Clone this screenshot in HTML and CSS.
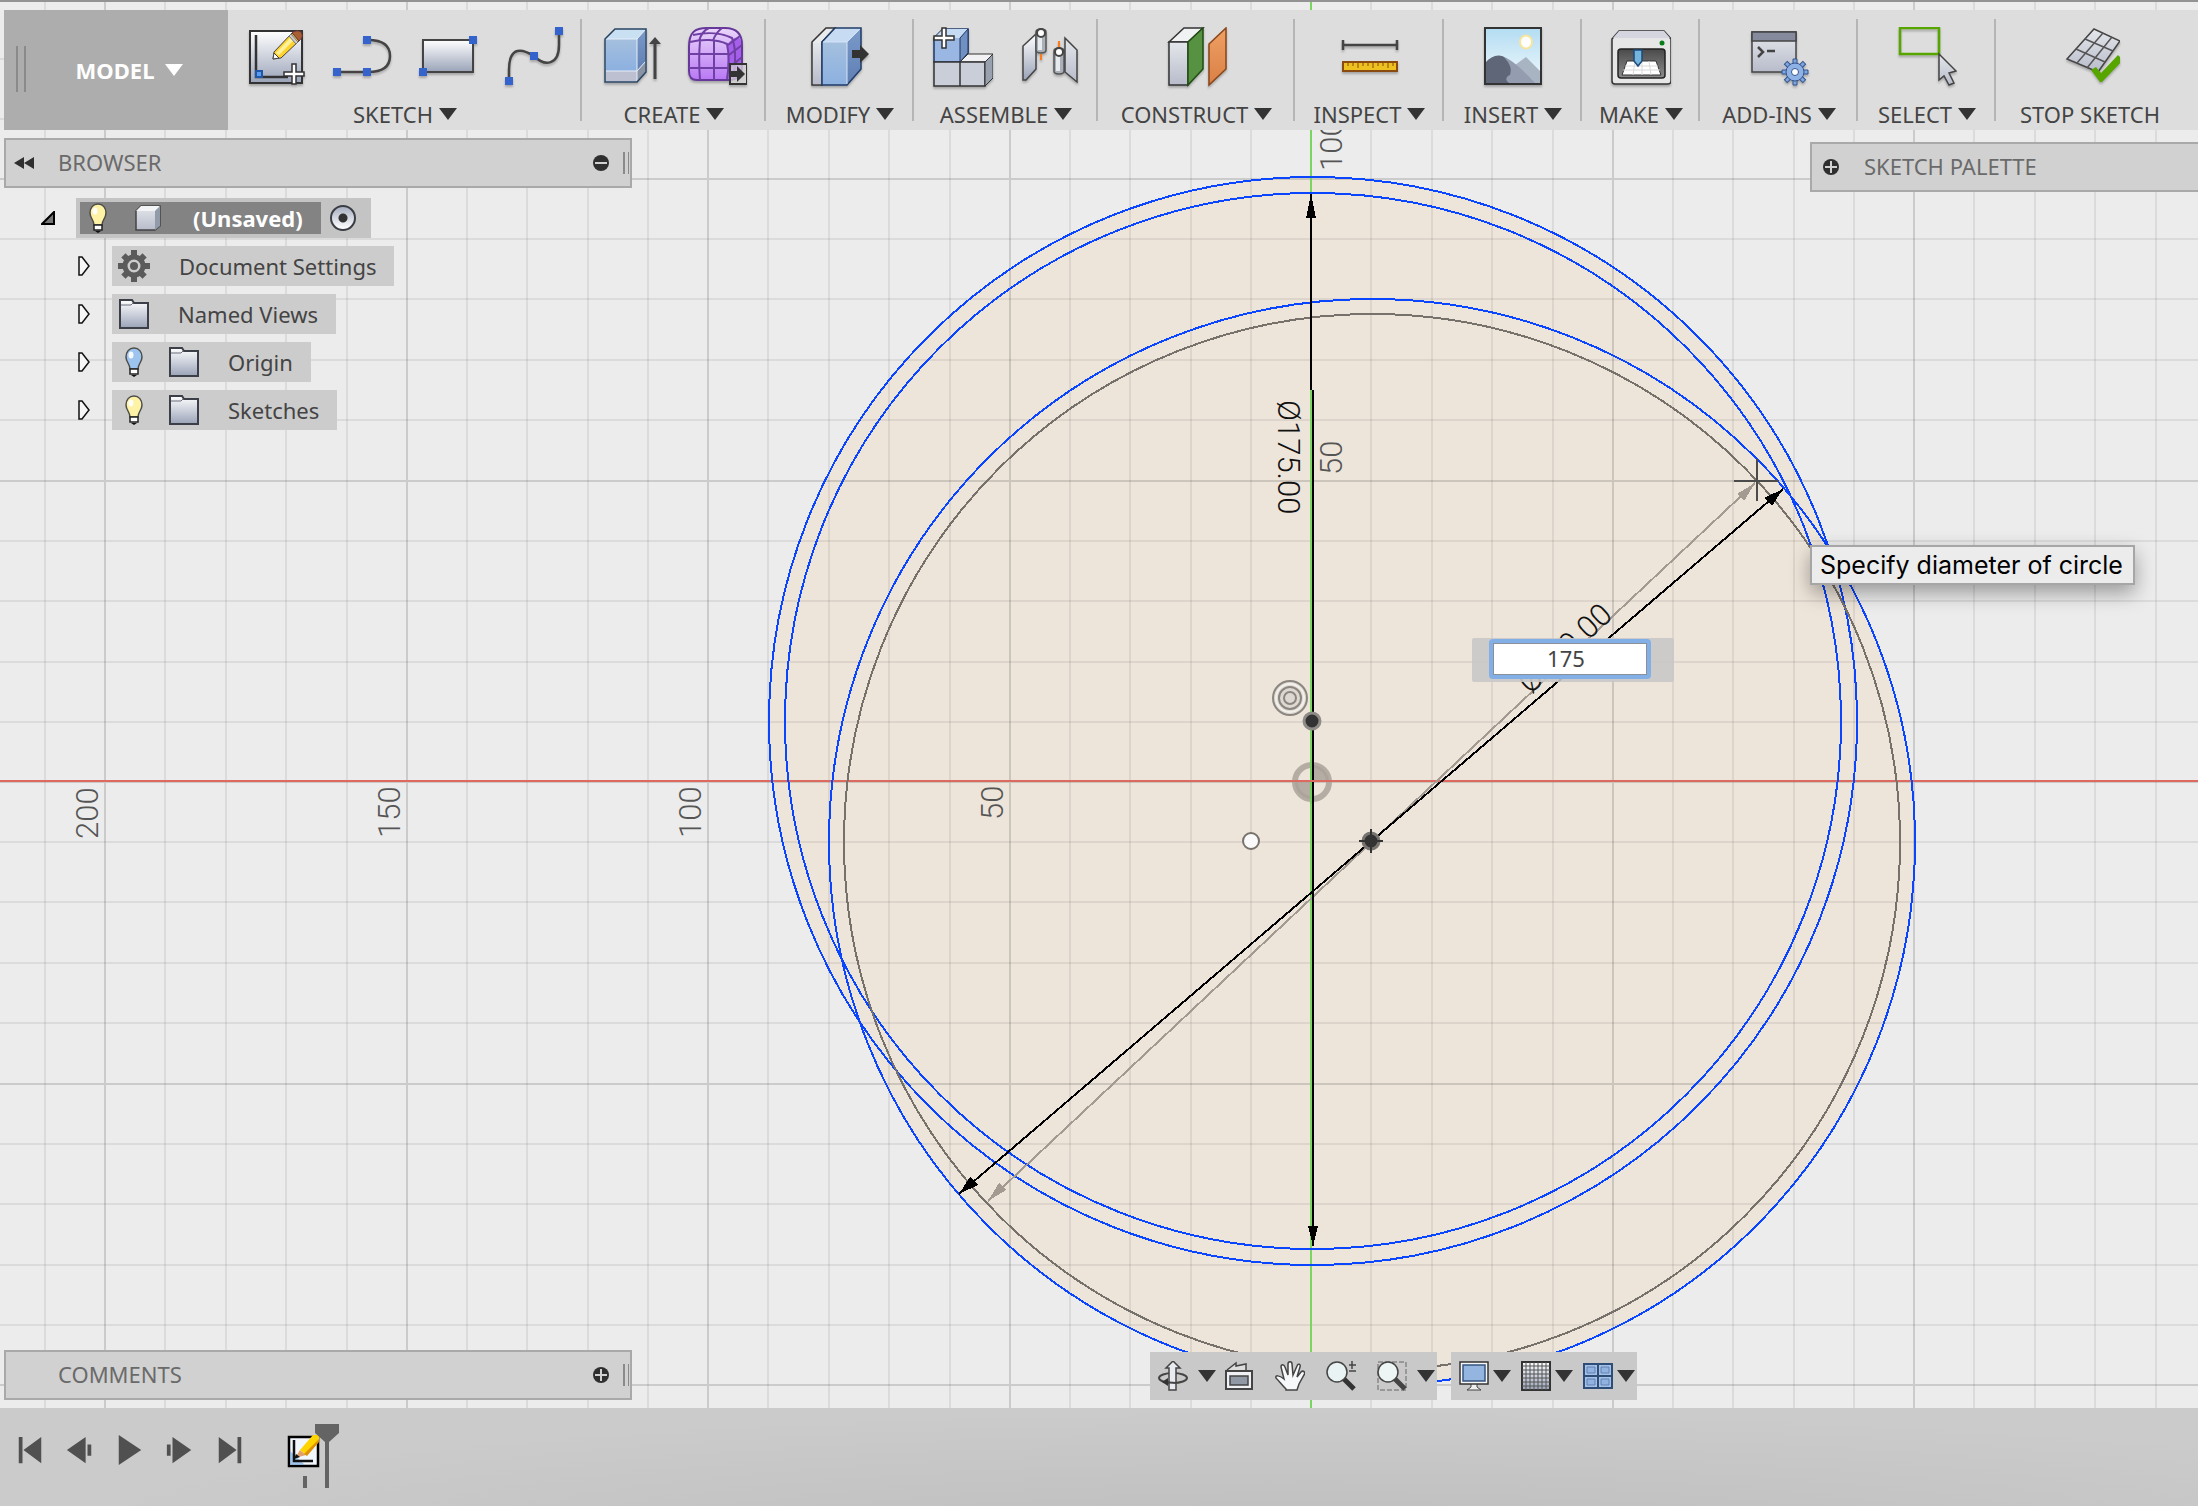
FILE: index.html
```html
<!DOCTYPE html>
<html lang="en">
<head>
<meta charset="utf-8">
<title>Sketch workspace</title>
<link rel="stylesheet" href="styles.css">
</head>
<body>
<svg class="defs" width="0" height="0" aria-hidden="true">
  <defs>
    <linearGradient id="steel" x1="0" y1="0" x2="0" y2="1"><stop offset="0" stop-color="#fff"/><stop offset="1" stop-color="#9aa3b8"/></linearGradient>
    <linearGradient id="pale" x1="0" y1="0" x2="0" y2="1"><stop offset="0" stop-color="#e4e7ea"/><stop offset="1" stop-color="#b8bccb"/></linearGradient>
    <linearGradient id="blue" x1="0" y1="0" x2="0" y2="1"><stop offset="0" stop-color="#a5c0de"/><stop offset="1" stop-color="#8cb0e0"/></linearGradient>
    <linearGradient id="side" x1="0" y1="0" x2="0" y2="1"><stop offset="0" stop-color="#7b9ac9"/><stop offset="1" stop-color="#5f7fb4"/></linearGradient>
    <linearGradient id="purple" x1="0" y1="0" x2="0" y2="1"><stop offset="0" stop-color="#ead6fa"/><stop offset="1" stop-color="#b878f4"/></linearGradient>
    <linearGradient id="sky" x1="0" y1="0" x2="0" y2="1"><stop offset="0" stop-color="#b3dcf2"/><stop offset="1" stop-color="#f2fafd"/></linearGradient>
    <linearGradient id="orange" x1="0" y1="0" x2="0" y2="1"><stop offset="0" stop-color="#f0a064"/><stop offset="1" stop-color="#d98046"/></linearGradient>
    <linearGradient id="screen" x1="0" y1="0" x2="0" y2="1"><stop offset="0" stop-color="#4a4a4a"/><stop offset="1" stop-color="#8d8d8d"/></linearGradient>
    <symbol id="folder" viewBox="0 0 30 32">
      <path d="M1 30V2H13L15 5H29V30Z" fill="url(#steel)" stroke="#3c3f48" stroke-width="2"/>
      <path d="M2 7H12L14 5" fill="none" stroke="#6a6e7c" stroke-width="1"/>
    </symbol>
    <symbol id="bulb" viewBox="0 0 18 30">
      <path d="M9 1C4 1 1 5 1 10C1 15 5 17 5 22H13C13 17 17 15 17 10C17 5 14 1 9 1Z" fill="currentColor" stroke="#4d4d48" stroke-width="1.5"/>
      <path d="M5 22H13V27H5Z" fill="#fff" stroke="#222" stroke-width="1.5"/>
      <path d="M6 28H12L9 30Z" fill="#111"/><ellipse cx="6" cy="8" rx="2.5" ry="3.5" fill="#fff" opacity=".9"/>
    </symbol>
    <symbol id="caret" viewBox="0 0 18 12"><path d="M0 0H18L9 12Z" fill="currentColor"/></symbol>
    <symbol id="closed" viewBox="0 0 12 20"><path d="M1 1H4L11 10L4 19H1Z" fill="#f6f6f6" stroke="#111" stroke-width="1.5"/></symbol>
    <symbol id="plus" viewBox="0 0 16 16"><circle cx="8" cy="8" r="8" fill="#2f2f2f"/><path d="M8 2V14M2 8H14" stroke="#d1d1d1" stroke-width="2"/></symbol>
    <symbol id="minus" viewBox="0 0 16 16"><circle cx="8" cy="8" r="8" fill="#2f2f2f"/><path d="M2 8H14" stroke="#d1d1d1" stroke-width="2"/></symbol>
  </defs>
</svg>

<div class="app">
<main class="workspace">
  <svg class="canvas" width="100%" height="100%" role="img" aria-label="Sketch with two pairs of circles">
    <defs>
      <pattern id="grid" x="104" y="178" width="603" height="603" patternUnits="userSpaceOnUse">
        <path fill="#000" fill-opacity=".07" d="M60 0h2v603h-2zM121 0h2v603h-2zM181 0h2v603h-2zM242 0h2v603h-2zM362 0h2v603h-2zM422 0h2v603h-2zM483 0h2v603h-2zM543 0h2v603h-2z"/>
        <path fill="#000" fill-opacity=".07" d="M0 60h603v2H0zM0 120h603v2H0zM0 181h603v2H0zM0 241h603v2H0zM0 362h603v2H0zM0 422h603v2H0zM0 483h603v2H0zM0 543h603v2H0z"/>
        <path fill="#000" fill-opacity=".14" d="M0 0h2v603h-2zM302 0h2v603h-2zM0 0h603v2H0zM0 302h603v2H0z"/>
      </pattern>
    </defs>
    <path class="region" d="M769 721a544 544 0 1 0 1088 0a544 544 0 1 0 -1088 0ZM829 842a543 543 0 1 0 1086 0a543 543 0 1 0 -1086 0Z"/>
    <rect width="100%" height="100%" fill="url(#grid)"/>
    <rect class="axis-x" x="0" y="780" width="100%" height="2"/>
    <rect class="axis-y" x="1310" y="0" width="2" height="100%"/>
    <g class="curve">
      <circle cx="1313" cy="721" r="544"/><circle cx="1313" cy="721" r="528"/><circle cx="1372" cy="842" r="543"/>
      <circle class="preview" cx="1372" cy="842" r="528"/>
    </g>
    <g class="ruler">
      <text transform="translate(98 839) rotate(-90)">200</text>
      <text transform="translate(400 838) rotate(-90)">150</text>
      <text transform="translate(701 838) rotate(-90)">100</text>
      <text transform="translate(1003 820) rotate(-90)">50</text>
      <text transform="translate(1342 475) rotate(-90)">50</text>
      <text transform="translate(1342 171) rotate(-90)">100</text>
    </g>
    <g class="ghost"><path d="M1755 483L988 1201" fill="none"/><path d="M1755 483L1744 501L1737 494ZM988 1201L999 1183L1006 1190Z" stroke="none"/></g>
    <g class="dimension">
      <path d="M1783 489L959 1194M1311 194V390M1313 390V1246" fill="none"/>
      <path d="M1783 489L1772 506L1764 498ZM959 1194L970 1177L978 1185ZM1311 194L1316 218H1306ZM1313 1246L1318 1226H1308Z" stroke="none"/>
    </g>
    <g class="dim-text">
      <text transform="translate(1278 400) rotate(90)">Ø175.00</text>
      <text transform="translate(1614 617) rotate(-43)" text-anchor="end">Ø180.00</text>
    </g>
    <g fill="none" stroke="#8b8780" stroke-width="2"><circle cx="1290" cy="698" r="17" fill="#ddd8d0"/><circle cx="1290" cy="698" r="14" stroke="#f3f0ec"/><circle cx="1290" cy="698" r="11"/><circle cx="1290" cy="698" r="6"/></g>
    <g><circle cx="1312" cy="782" r="17" fill="none" stroke="#aaa29a" stroke-width="6" opacity=".85"/><path d="M1312 782V765A17 17 0 0 1 1329 782ZM1312 782V799A17 17 0 0 1 1295 782Z" fill="#aaa29a" opacity=".85"/><path d="M1311 760V804" stroke="#6fce58" stroke-width="2"/><path d="M1313 760V804" stroke="#000" stroke-width="2"/><path d="M1290 781H1334" stroke="#dc6a60" stroke-width="2"/></g>
    <circle cx="1312" cy="721" r="8" fill="#333" stroke="#8f8c88" stroke-width="3"/>
    <circle cx="1251" cy="841" r="8" fill="#fafafa" stroke="#77726c" stroke-width="2"/>
    <circle cx="1371" cy="841" r="8" fill="#333" stroke="#77746f" stroke-width="3"/>
    <path d="M1371 829V853M1359 841H1383" stroke="#333" stroke-width="2"/>
    <path d="M1757 459V501M1734 481H1778" stroke="#4b4b4b" stroke-width="2"/>
  </svg>

  <header class="toolbar">
    <button class="mode"><span class="grip"></span><span>MODEL</span><svg class="caret"><use href="#caret"/></svg></button>
    <nav class="groups" aria-label="Tools">
      <section class="group">
        <div class="icons">
          <svg class="icon" viewBox="0 0 60 60"><rect x="4" y="4" width="52" height="52" fill="url(#steel)" stroke="#333" stroke-width="2"/><path d="M10 8V50H42" fill="none" stroke="#333" stroke-width="2.5"/><rect x="10" y="44" width="6" height="6" fill="#5b9bf0" stroke="#1f57a8" stroke-width="2"/><path d="M27 32L28 25L46 6L54 13L35 31Z" fill="#ffd32e" stroke="#444"/><path d="M30 26L47 8L50 11L33 28Z" fill="#fff19a"/><path d="M43 9L50 17L52 15L45 7Z" fill="#ccc" stroke="#777"/><path d="M46 6C49 3 55 3 56 7C57 10 55 12 53 14Z" fill="#a85f34" stroke="#633"/><path d="M27 32L28 26L33 31Z" fill="#fff" stroke="#444"/><path d="M46 37H50V45H58V49H50V57H46V49H38V45H46Z" fill="#fff" stroke="#333" stroke-width="1.5"/></svg>
          <svg class="icon" viewBox="0 0 60 60"><path d="M5 45H36C51 45 58 40 58 29S51 13 36 13" fill="none" stroke="#444" stroke-width="2.5"/><path d="M1 41h8v8H1zM31 41h8v8h-8zM31 9h8v8h-8z" fill="#3563cc"/></svg>
          <svg class="icon" viewBox="0 0 60 60"><rect x="5" y="13" width="50" height="32" fill="url(#steel)" stroke="#444" stroke-width="2"/><path d="M1 41h8v8H1zM51 9h8v8h-8z" fill="#3563cc"/></svg>
          <svg class="icon" viewBox="0 0 60 60"><path d="M5 54V43C5 18 19 22 30 29C41 40 55 38 55 18V4" fill="none" stroke="#444" stroke-width="2.5"/><path d="M1 50h8v8H1zM26 25h8v8h-8zM51 0h8v8h-8z" fill="#3563cc"/></svg>
        </div>
        <button class="label">SKETCH<svg class="caret"><use href="#caret"/></svg></button>
      </section>
      <section class="group">
        <div class="icons">
          <svg class="icon" viewBox="0 0 60 60"><path d="M4 12L14 2H45L36 12Z" fill="#c9dff2"/><path d="M4 12H36V44H4Z" fill="url(#blue)"/><path d="M36 12L45 2V34L36 44Z" fill="url(#side)"/><path d="M4 44H36V55H4Z" fill="#bcc0d0"/><path d="M36 44L45 34V45L36 55Z" fill="#8a93a3"/><path d="M4 12L14 2H45V45L36 55H4ZM4 44H36L45 34M4 12H36V55M36 12L45 2" fill="none" stroke="#e6eef8"/><path d="M4 12L14 2H45V45L36 55H4Z" fill="none" stroke="#26425f" stroke-width="1.5"/><path d="M54 52V15" stroke="#444" stroke-width="3"/><path d="M48 17L54 10L60 17Z" fill="#444"/></svg>
          <svg class="icon" viewBox="0 0 60 60"><path d="M2 20C2 5 8 1 20 1H38C50 1 55 8 55 18V38C55 47 51 53 42 53H10C4 53 2 50 2 44Z" fill="url(#purple)" stroke="#66389a" stroke-width="2"/><path d="M41 17C46 10 50 10 54 12V42L46 51L40 52Z" fill="#a55feb"/><path d="M3 15C15 12 30 12 40 17C42 26 42 40 40 52M12 14C14 7 17 3 22 1M26 14C28 7 31 4 35 1M13 14C12 25 12 40 13 53M27 13V53M2 27H41M2 41H41M6 8C20 5 35 6 45 11C49 20 49 38 46 51M41 18L53 9M42 28L55 18M42 41L55 30" fill="none" stroke="#6f3fa4" stroke-width="2"/><rect x="43" y="37" width="17" height="20" fill="#ddd" fill-opacity=".7" stroke="#333" stroke-width="2"/><path d="M43 44H50V39L58 47L50 55V50H43Z" fill="#333"/></svg>
        </div>
        <button class="label">CREATE<svg class="caret"><use href="#caret"/></svg></button>
      </section>
      <section class="group">
        <div class="icons">
          <svg class="icon" viewBox="0 0 60 60"><path d="M2 15L16 1H25L12 15V58H2Z" fill="#e9ebed" stroke="#333" stroke-width="1.5"/><path d="M3 16H11V57H3Z" fill="url(#pale)"/><path d="M12 15L25 1H51L37 15Z" fill="#c7dcf3"/><path d="M12 15H37V58H12Z" fill="url(#blue)"/><path d="M37 15L51 1V42L37 58Z" fill="url(#side)"/><path d="M12 15L25 1H51V42L37 58H12Z" fill="none" stroke="#203c69" stroke-width="1.5"/><path d="M13 15H37V57M37 15L50 2" fill="none" stroke="#d5e4f6"/><path d="M42 23H50V18L59 27L50 36V31H42Z" fill="#333"/></svg>
        </div>
        <button class="label">MODIFY<svg class="caret"><use href="#caret"/></svg></button>
      </section>
      <section class="group">
        <div class="icons">
          <svg class="icon" viewBox="0 0 60 60"><path d="M1 11L10 2H35V26L27 35H1Z" fill="#9ab6e2" stroke="#1f3765" stroke-width="1.5"/><path d="M1 11L10 2H35L27 11Z" fill="#c5dbf4"/><path d="M27 11L35 2V26L27 35Z" fill="#7190c2" stroke="#1f3765"/><path d="M27 35L35 27H60L52 35Z" fill="#f2f2f4" stroke="#333"/><path d="M1 35H27V59H1ZM27 35H52V59H27Z" fill="#caced8" stroke="#333" stroke-width="1.5"/><path d="M52 35L60 27V51L52 59Z" fill="#98a1ad" stroke="#333"/><path d="M9 1H13V9H21V13H13V21H9V13H1V9H9Z" fill="#fff" stroke="#333" stroke-width="1.5"/></svg>
          <svg class="icon" viewBox="0 0 60 60"><path d="M4 19L17 7V42L7 53H4Z" fill="url(#steel)" stroke="#444" stroke-width="1.5"/><path d="M17 5C17 1 27 1 27 5V23C27 27 17 27 17 23Z" fill="#aab0b9" stroke="#555" stroke-width="1.5"/><path d="M21 8V23" stroke="#e8ebee" stroke-width="4"/><circle cx="22" cy="6" r="4" fill="#fff" stroke="#444" stroke-width="2"/><path d="M22 27V33M40 14V25" stroke="#ff7a1a" stroke-width="2"/><path d="M35 24C35 20 45 20 45 24V44C45 48 35 48 35 44Z" fill="#aab0b9" stroke="#555" stroke-width="1.5"/><path d="M39 27V44" stroke="#e8ebee" stroke-width="4"/><circle cx="40" cy="25" r="4" fill="#fff" stroke="#444" stroke-width="2"/><path d="M46 11L58 23V55L46 45Z" fill="url(#pale)" stroke="#444" stroke-width="1.5"/></svg>
        </div>
        <button class="label">ASSEMBLE<svg class="caret"><use href="#caret"/></svg></button>
      </section>
      <section class="group">
        <div class="icons">
          <svg class="icon" viewBox="0 0 60 60"><path d="M2 15L17 1H36L21 15Z" fill="#f1f2f3" stroke="#333" stroke-width="1.5"/><path d="M2 15H21V58H2Z" fill="url(#pale)" stroke="#333" stroke-width="1.5"/><path d="M21 15L36 1V42L21 58Z" fill="#569242" stroke="#214e12" stroke-width="1.5"/><path d="M42 17L59 1V42L42 58Z" fill="url(#orange)" stroke="#8a4416" stroke-width="1.5"/></svg>
        </div>
        <button class="label">CONSTRUCT<svg class="caret"><use href="#caret"/></svg></button>
      </section>
      <section class="group">
        <div class="icons">
          <svg class="icon" viewBox="0 0 60 60"><path d="M3 13V23M57 13V23M3 18H57" stroke="#444" stroke-width="2.5"/><rect x="3" y="35" width="54" height="9" fill="#edc11f" stroke="#8a4a10" stroke-width="2"/><path d="M8 36v3M13 36v3M18 36v5M23 36v3M28 36v3M33 36v5M38 36v3M43 36v3M48 36v5M53 36v3" stroke="#8a4a10"/></svg>
        </div>
        <button class="label">INSPECT<svg class="caret"><use href="#caret"/></svg></button>
      </section>
      <section class="group">
        <div class="icons">
          <svg class="icon" viewBox="0 0 60 60"><rect x="2" y="1" width="56" height="56" fill="url(#sky)"/><ellipse cx="43" cy="15" rx="6" ry="6.5" fill="#fff" stroke="#f5e69b" stroke-width="2"/><path d="M32 38L43 30L58 45V57H40Z" fill="#a9b4c3"/><path d="M2 36C9 28 17 26 24 32C35 40 45 51 52 57H2Z" fill="#5f6678"/><path d="M21 30C30 33 44 47 53 57H28C20 53 24 49 27 48C29 41 27 37 21 30Z" fill="#949cb0"/><rect x="2" y="1" width="56" height="56" fill="none" stroke="#333" stroke-width="2"/></svg>
        </div>
        <button class="label">INSERT<svg class="caret"><use href="#caret"/></svg></button>
      </section>
      <section class="group">
        <div class="icons">
          <svg class="icon" viewBox="0 0 60 60"><path d="M8 4H53L60 12V54Q60 57 57 57H4Q1 57 1 54V12Z" fill="#e6e6e6" stroke="#333" stroke-width="1.5"/><path d="M8 4H53L59 11H2Z" fill="#d4d5df"/><circle cx="51" cy="16" r="2.5" fill="#087d19"/><rect x="7" y="22" width="47" height="29" rx="3" fill="url(#screen)" stroke="#222" stroke-width="1.5"/><path d="M16 34H45L50 48H11Z" fill="#fff" stroke="#333"/><path d="M24 34L22 48M31 34V48M38 34L40 48M14 39H47M12 43H49" stroke="#d8d8d8"/><path d="M23 23H31V34L27 39L23 34Z" fill="#73b5dc" stroke="#1d4a7a" stroke-width="1.5"/></svg>
        </div>
        <button class="label">MAKE<svg class="caret"><use href="#caret"/></svg></button>
      </section>
      <section class="group">
        <div class="icons">
          <svg class="icon" viewBox="0 0 60 60"><rect x="3" y="5" width="44" height="40" fill="url(#pale)" stroke="#444" stroke-width="1.5"/><rect x="3" y="5" width="44" height="9" fill="#858b9c" stroke="#444" stroke-width="1.5"/><path d="M9 20L14 25L9 30M18 24H26" fill="none" stroke="#444" stroke-width="2.5"/><g transform="translate(46 45)"><path d="M-2-13h4v26h-4zM-13-2h26v4h-26z" fill="#7fa6df" stroke="#34558c"/><path d="M-2-13h4v26h-4zM-13-2h26v4h-26z" transform="rotate(45)" fill="#7fa6df" stroke="#34558c"/><circle r="9" fill="#8fb2e6" stroke="#34558c"/><circle r="3.5" fill="#fff" stroke="#34558c"/></g></svg>
        </div>
        <button class="label">ADD-INS<svg class="caret"><use href="#caret"/></svg></button>
      </section>
      <section class="group">
        <div class="icons">
          <svg class="icon" viewBox="0 0 60 60"><rect x="3" y="1" width="39" height="26" fill="none" stroke="#57a600" stroke-width="2.5"/><path d="M42 27V53L47 49L52 58L57 56L52 46L59 44Z" fill="url(#pale)" stroke="#444" stroke-width="1.5"/></svg>
        </div>
        <button class="label">SELECT<svg class="caret"><use href="#caret"/></svg></button>
      </section>
      <section class="group">
        <div class="icons">
          <svg class="icon" viewBox="-6 0 60 60"><path d="M28 2L54 14L32 45L1 32Z" fill="url(#pale)" stroke="#444" stroke-width="1.5"/><path d="M37 6L11 36M46 10L21 41M19 12L47 24M10 22L39 35" stroke="#555" stroke-width="1.5"/><path d="M25 43L30 40L35 46L52 28L57 33L36 55H34Z" fill="#57a600"/></svg>
        </div>
        <button class="label">STOP SKETCH</button>
      </section>
    </nav>
  </header>

  <div class="middle">
    <aside class="browser">
      <h2 class="panel"><svg class="rewind" viewBox="0 0 20 12"><path d="M10 0V12L0 6ZM20 0V12L10 6Z" fill="#2f2f2f"/></svg><span class="title">BROWSER</span><button class="round" aria-label="Collapse"><svg><use href="#minus"/></svg></button><span class="handle"></span></h2>
      <ul class="tree">
        <li class="root"><svg class="open" viewBox="0 0 14 14"><path d="M13 1V13H1Z" fill="#777" stroke="#000" stroke-width="2"/></svg>
          <span class="chip active"><span class="name"><svg class="bulb"><use href="#bulb"/></svg><svg class="cube" viewBox="0 0 26 26"><path d="M1 6L6 1H25V21L20 25H1Z" fill="url(#pale)" stroke="#444" stroke-width="1.5"/><path d="M1 6L6 1H25L20 6Z" fill="#f3f4f6"/><path d="M20 6L25 1V21L20 25Z" fill="#929baa"/></svg><b>(Unsaved)</b></span><input class="dot" type="radio" checked aria-label="Activate component"></span></li>
        <li><svg class="closed"><use href="#closed"/></svg><span class="chip"><svg class="gear" viewBox="-16 -16 32 32"><path d="M-3-16h6v32h-6zM-16-3h32v6h-32z" fill="#5b5b5b"/><path d="M-3-15h6v30h-6zM-15-3h30v6h-30z" transform="rotate(45)" fill="#5b5b5b"/><circle r="9" fill="#ccc" stroke="#5b5b5b" stroke-width="5"/><circle r="4" fill="#5b5b5b"/></svg>Document Settings</span></li>
        <li><svg class="closed"><use href="#closed"/></svg><span class="chip"><svg class="folder"><use href="#folder"/></svg>Named Views</span></li>
        <li><svg class="closed"><use href="#closed"/></svg><span class="chip"><svg class="bulb off"><use href="#bulb"/></svg><svg class="folder"><use href="#folder"/></svg>Origin</span></li>
        <li><svg class="closed"><use href="#closed"/></svg><span class="chip"><svg class="bulb"><use href="#bulb"/></svg><svg class="folder"><use href="#folder"/></svg>Sketches</span></li>
      </ul>
    </aside>
    <h2 class="panel palette"><button class="round" aria-label="Expand"><svg><use href="#plus"/></svg></button><span class="title">SKETCH PALETTE</span></h2>
  </div>

  <footer class="dock">
    <h2 class="panel comments"><span class="title">COMMENTS</span><button class="round" aria-label="Expand"><svg><use href="#plus"/></svg></button><span class="handle"></span></h2>
    <div class="views">
      <div class="view-bar">
        <button class="drop" aria-label="Orbit"><svg class="small" viewBox="0 0 30 30"><ellipse cx="15" cy="17" rx="14" ry="5" fill="none" stroke="#444" stroke-width="2"/><path d="M11 29V7H8L15 0L22 7H18V29Z" fill="#e8ebf0" stroke="#444" stroke-width="1.5"/><path d="M18 22L5 21" stroke="#444" stroke-width="2"/><path d="M4 21L10 17V25Z" fill="#333"/></svg><svg class="caret"><use href="#caret"/></svg></button>
        <button aria-label="Look at"><svg class="small" viewBox="0 0 30 30"><path d="M3 9L12 2V5L22 3V9" fill="#ddd" stroke="#444" stroke-width="1.5"/><rect x="2" y="10" width="26" height="18" fill="#f0f1f4" stroke="#444" stroke-width="2"/><rect x="6" y="15" width="18" height="9" fill="#9299a6" stroke="#444" stroke-width="1.5"/></svg></button>
        <button class="wide" aria-label="Pan"><svg class="small" viewBox="0 0 30 30"><path d="M11 28C7 24 4 20 1 17C0 14 4 14 9 18L6 6C6 3 9 3 10 6L13 14V3C13 0 17 0 17 3L18 14L22 5C23 2 26 3 25 6L22 16L26 11C28 9 31 11 29 14L24 23L22 29H11Z" fill="#f7f8fa" stroke="#444" stroke-width="1.5"/></svg></button>
        <button class="wide" aria-label="Zoom"><svg class="small" viewBox="0 0 30 30"><path d="M18 18L28 28" stroke="#333" stroke-width="5"/><circle cx="11" cy="11" r="10" fill="#e9f3f3" stroke="#444" stroke-width="1.5"/><path d="M23 4H30M26 0V8M23 10H30" stroke="#444" stroke-width="1.5"/></svg></button>
        <button class="drop" aria-label="Fit"><svg class="small" viewBox="0 0 30 30"><rect x="1" y="1" width="28" height="28" fill="none" stroke="#666" stroke-dasharray="5 2"/><path d="M18 18L28 28" stroke="#444" stroke-width="5"/><circle cx="11" cy="11" r="10" fill="#edf6f4" stroke="#444" stroke-width="1.5"/></svg><svg class="caret"><use href="#caret"/></svg></button>
      </div>
      <div class="view-bar">
        <button class="near" aria-label="Display settings"><svg class="small" viewBox="0 0 30 30"><path d="M12 22H18V26L22 29H8L12 26Z" fill="#eee" stroke="#444"/><rect x="1" y="1" width="28" height="22" fill="#f7f7f7" stroke="#333" stroke-width="1.5"/><rect x="4" y="4" width="22" height="16" fill="#94b5e0" stroke="#35557f" stroke-width="1.5"/></svg><svg class="caret"><use href="#caret"/></svg></button>
        <button class="near" aria-label="Grid and snaps"><svg class="small" viewBox="0 0 30 30"><rect x="1" y="1" width="28" height="28" fill="url(#steel)" stroke="#333" stroke-width="2"/><path d="M5 1V29M9 1V29M13 1V29M17 1V29M21 1V29M25 1V29M1 5H29M1 9H29M1 13H29M1 17H29M1 21H29M1 25H29" stroke="#555"/></svg><svg class="caret"><use href="#caret"/></svg></button>
        <button class="near" aria-label="Viewports"><svg class="small" viewBox="0 0 30 30"><rect x="1" y="3" width="28" height="24" fill="#a6c1e6" stroke="#2e4d78" stroke-width="2"/><path d="M15 3V27M1 15H29" stroke="#2e4d78" stroke-width="2"/><path d="M4 6H12V12H4ZM18 6H26V12H18ZM4 18H12V24H4ZM18 18H26V24H18Z" fill="#92b2e0" stroke="#5f82b5"/></svg><svg class="caret"><use href="#caret"/></svg></button>
      </div>
    </div>
  </footer>

  <label class="entry"><input type="text" value="175" aria-label="Diameter"></label>
  <div class="tooltip" role="tooltip">Specify diameter of circle</div>
</main>

<footer class="timeline">
  <div class="player">
    <button aria-label="Start"><svg class="small" viewBox="0 0 30 32"><path d="M3 2H7V30H3ZM27 2V30L8 16Z" fill="#505050"/></svg></button>
    <button aria-label="Step back"><svg class="small" viewBox="0 0 30 32"><path d="M21 2V30L1 16ZM23 10H27V22H23Z" fill="#505050"/></svg></button>
    <button aria-label="Play"><svg class="small" viewBox="0 0 30 32"><path d="M3 0V32L27 16Z" fill="#505050"/></svg></button>
    <button aria-label="Step forward"><svg class="small" viewBox="0 0 30 32"><path d="M7 2V30L27 16ZM1 10H5V22H1Z" fill="#505050"/></svg></button>
    <button aria-label="End"><svg class="small" viewBox="0 0 30 32"><path d="M3 2V30L22 16ZM23 2H27V30H23Z" fill="#505050"/></svg></button>
  </div>
  <svg class="marker" viewBox="0 0 54 66" role="img" aria-label="Sketch feature"><rect x="2" y="14" width="29" height="29" fill="#f2f7fd" stroke="#000" stroke-width="2.5"/><path d="M3 28L18 42H3Z" fill="#7fb0e4" opacity=".7"/><path d="M7 17V38H26" fill="none" stroke="#111" stroke-width="2.5"/><path d="M8 35L13 27L19 32Z" fill="#e2a06c"/><path d="M13 27L26 12H32V18L19 32Z" fill="#ffd400"/><path d="M17 31L32 16V19L20 33Z" fill="#e09000"/><path d="M7 36L9 31L13 34Z" fill="#111"/><path d="M28 1H52V10L42 19V65H38V19L28 10ZM16 53H20V65H16Z" fill="#646464"/></svg>
</footer>
</div>
</body>
</html>
```
FILE: styles.css
```css
* { box-sizing: border-box; }
body { margin: 0; font: 22px/30px "Noto Sans", sans-serif; color: #444; }
button { border: 0; padding: 0; background: none; color: inherit; font: inherit; display: flex; align-items: center; }
svg { display: block; flex: none; }
.defs { position: absolute; }

.app { display: flex; flex-direction: column; min-height: 100vh; }
.workspace { position: relative; flex: 1; display: flex; flex-direction: column; overflow: hidden; background: #ececec; border-top: 2px solid #939393; }

/* drawing canvas behind the panels */
.canvas { position: absolute; inset: -2px 0 0; height: calc(100% + 2px); }
.region { fill: #eee5da; }
.axis-x { fill: #dc6a60; }
.axis-y { fill: #7bd561; }
.curve { fill: none; stroke: #0a45ff; stroke-width: 2; shape-rendering: crispEdges; }
.preview { stroke: #77716b; }
.ruler, .dim-text { font: 300 31px Roboto, sans-serif; fill: #555; }
.dim-text { fill: #111; }
.ghost { stroke: #a39b91; fill: #a39b91; stroke-width: 2; shape-rendering: crispEdges; }
.dimension { stroke: #000; fill: #000; stroke-width: 2; shape-rendering: crispEdges; }

.toolbar { position: relative; display: flex; margin: 8px 0 0 4px; background: #ddd; }
.mode { position: relative; width: 224px; justify-content: center; gap: 11px; padding-left: 27px; background: #adadad; color: #fff; font-weight: 700; }
.grip { position: absolute; left: 12px; top: 36px; width: 10px; height: 46px; border: solid #8a8a8a; border-width: 0 2px; }
.caret { width: 18px; height: 12px; color: #333; }
.mode .caret { color: #fff; }
.groups { flex: 1; display: grid; grid-template-columns: 354fr 184fr 148fr 184fr 197fr 149fr 138fr 118fr 158fr 138fr 202fr; }
.group { display: flex; flex-direction: column; align-items: center; gap: 12px; min-width: 0; padding: 17px 0 1px;
  background: linear-gradient(#b5b5b5, #b5b5b5) right 9px / 2px 102px no-repeat; }
.group:last-child { background: none; padding-right: 14px; }
.icons { display: flex; gap: 26px; }
.icon { width: 60px; height: 60px; filter: drop-shadow(0 2px 1px rgba(0, 0, 0, .25)); }
.label { gap: 6px; white-space: nowrap; }

.middle { position: relative; flex: 1; display: flex; justify-content: space-between; align-items: flex-start; padding: 8px 0 0 4px; }
.panel { display: flex; align-items: center; height: 50px; margin: 0; border: 2px solid #a9a9a9; background: #d1d1d1; color: #6a6a6a; font-size: 22px; line-height: 30px; font-weight: 400; }
.browser { width: 628px; }
.rewind { width: 20px; height: 12px; margin: 0 24px 0 8px; }
.title { flex: 1; padding-bottom: 3px; }
.round svg { width: 16px; height: 16px; }
.handle { width: 6px; height: 22px; margin: 0 1px 0 14px; border: solid #8a8a8a; border-width: 0 1px 0 2px; }
.palette { width: 388px; margin-top: 4px; border-right: 0; padding-left: 11px; gap: 25px; }

.tree { display: grid; gap: 8px; margin: 10px 0 0; padding: 0 0 0 74px; list-style: none; line-height: 28px; }
.tree li { display: flex; align-items: center; gap: 22px; }
.tree .root { margin-left: -37px; gap: 21px; }
.closed { width: 12px; height: 20px; }
.open { width: 14px; height: 14px; }
.chip { display: flex; align-items: center; height: 40px; padding: 0 18px 0 6px; background: #ccc; }
.chip.active { padding: 0 15px 0 4px; gap: 9px; background: #c4c4c4; }
.name { display: flex; align-items: center; height: 32px; padding: 0 18px 0 9px; background: #838383; color: #fff; }
.name .bulb { margin: 0 28px 0 0; }
.cube { width: 26px; height: 26px; margin-right: 32px; }
.gear { width: 32px; height: 32px; margin-right: 29px; }
.folder { width: 30px; height: 32px; margin: 0 29px 0 1px; }
.bulb { width: 18px; height: 30px; margin: 0 25px 0 7px; color: #fdf2a5; }
.bulb.off { color: #9cc4ef; }
.dot { appearance: none; width: 26px; height: 26px; margin: 0; border: 2px solid #3a3d44; border-radius: 50%; background: radial-gradient(circle, #333 4px, transparent 5px), linear-gradient(#a9b0c2, #fff); }

.dock { position: relative; display: flex; padding: 0 0 8px 4px; }
.comments { width: 628px; padding-left: 52px; }
.views { flex: 1; display: flex; justify-content: center; align-items: flex-end; gap: 14px; padding-right: 44px; }
.view-bar { display: flex; align-items: center; height: 48px; gap: 8px; padding: 0 2px 0 8px; background: #c9c9c9; }
.small { width: 30px; height: 30px; }
.drop { gap: 10px; }
.near { gap: 4px; }
.near + .near { padding-left: 2px; }
.wide { padding-left: 13px; }
.wide + .drop { padding-left: 13px; }

.entry { position: absolute; left: 1472px; top: 636px; width: 202px; height: 44px; padding: 1px 17px; border-radius: 2px; background: rgba(200, 200, 200, .9); }
.entry input { width: 162px; height: 40px; padding: 0 8px 3px 0; border: 4px solid #82b0e6; border-radius: 4px; background: #fff; color: #444; font: 22px/28px "Noto Sans", sans-serif; text-align: center; outline: 0; box-shadow: inset 0 0 0 1px #8a9099; }
.tooltip { position: absolute; left: 1810px; top: 543px; padding: 2px 10px 2px 8px; border: 2px solid #a6a6a6; background: #ececec; color: #000; font: 25px/32px Inter, sans-serif; white-space: nowrap; box-shadow: 0 8px 20px rgba(0, 0, 0, .35); }

.timeline { display: flex; align-items: flex-start; gap: 42px; height: 98px; padding: 15px; background: radial-gradient(ellipse at 60% 140%, #bdbdbd, #cbcbcb 70%); }
.player { display: flex; gap: 20px; padding-top: 12px; }
.marker { width: 54px; height: 66px; }
```
